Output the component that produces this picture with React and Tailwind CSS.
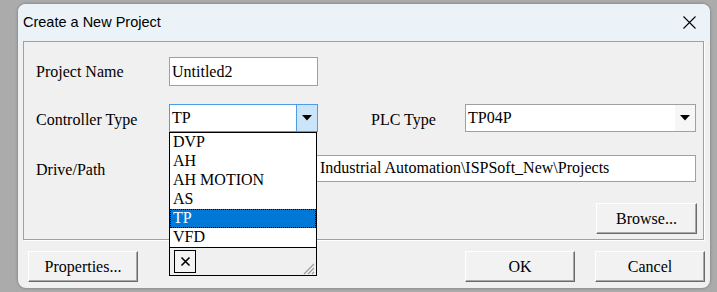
import React from "react";

const serif = { fontFamily: '"Liberation Serif", "Times New Roman", serif' };

function Arrow() {
  return (
    <svg width="10" height="6" viewBox="0 0 10 6">
      <polygon points="0,0 10,0 5,5.5" fill="#000" />
    </svg>
  );
}

function ClassicButton({ children, w = "w-[110px]" }) {
  return (
    <button
      className={
        "h-[31px] bg-[#f2f2f2] border border-t-white border-l-white border-r-[#6b6b6b] border-b-[#6b6b6b] shadow-[inset_-1px_-1px_0_#a8a8a8] text-[16px] text-black flex items-center justify-center " +
        w
      }
      style={serif}
    >
      {children}
    </button>
  );
}

const items = ["DVP", "AH", "AH MOTION", "AS", "TP", "VFD"];

export default function App() {
  return (
    <div className="w-[717px] h-[292px] bg-[#ababab] pl-[18px] pt-[4px] overflow-hidden">
      <div className="w-[692px] h-[284px] rounded-[8px] bg-[#f0f0f0] flex flex-col overflow-hidden shadow-[0_0_3px_rgba(0,0,0,0.35)]">
        {/* Title bar */}
        <div className="h-[37px] bg-[#ebf3f8] flex items-center justify-between pl-[5px] pr-[14px]">
          <span
            className="text-[14.5px] text-black leading-none"
            style={{ fontFamily: '"Liberation Sans", Arial, sans-serif' }}
          >
            Create a New Project
          </span>
          <svg width="13" height="13" viewBox="0 0 13 13">
            <path d="M0.5 0.5 L12.5 12.5 M12.5 0.5 L0.5 12.5" stroke="#000" strokeWidth="1.1" />
          </svg>
        </div>

        {/* Body */}
        <div className="px-[5px] flex flex-col" style={serif}>
          {/* Group box */}
          <div className="w-[681px] h-[199px] border border-[#a0a0a0] shadow-[1px_1px_0_#ffffff] flex flex-col pl-[12px] text-[16px] text-black">
            {/* Row 1 */}
            <div className="flex items-center mt-[15px]">
              <span className="w-[133px] pt-[1px]">Project Name</span>
              <div className="w-[149px] h-[29px] bg-white border border-[#a0a0a0] flex items-center pl-[2px]">
                Untitled2
              </div>
            </div>

            {/* Row 2 */}
            <div className="flex items-center mt-[17px]">
              <span className="w-[133px] pt-[5px]">Controller Type</span>
              <div className="relative z-10">
                <div className="w-[149px] h-[28px] bg-white border border-[#4b9ee6] flex">
                  <div className="flex-1 flex items-center pl-[2px]">TP</div>
                  <div className="w-[21px] h-full bg-[#cce4f7] border-l border-[#4b9ee6] flex items-center justify-center">
                    <Arrow />
                  </div>
                </div>
                {/* Dropdown list */}
                <div className="absolute left-0 top-full w-[148px] bg-white border border-black flex flex-col">
                  {items.map((it) => (
                    <div
                      key={it}
                      className={
                        it === "TP"
                          ? "h-[19px] bg-[#0078d7] text-white border border-dotted border-black flex items-center pl-[2px] leading-none"
                          : "h-[19px] flex items-center pl-[3px] leading-none"
                      }
                    >
                      {it}
                    </div>
                  ))}
                  <div className="h-[28px] bg-[#f0f0f0] border-t border-black flex items-center justify-between pl-[4px] pr-[1px]">
                    <div className="w-[22px] h-[23px] border border-black bg-[#f4f4f4] flex items-center justify-center">
                      <svg width="11" height="11" viewBox="0 0 11 11">
                        <path d="M1.5 1.5 L9.5 9.5 M9.5 1.5 L1.5 9.5" stroke="#000" strokeWidth="1.6" />
                      </svg>
                    </div>
                    <svg width="14" height="14" viewBox="0 0 14 14" className="self-end">
                      <path d="M13 3 L3 13 M13 7 L7 13 M13 11 L11 13" stroke="#9a9a9a" strokeWidth="1.2" />
                    </svg>
                  </div>
                </div>
              </div>
              <span className="ml-[53px] w-[94px] pt-[5px]">PLC Type</span>
              <div className="w-[231px] h-[28px] bg-white border border-[#a0a0a0] flex">
                <div className="flex-1 flex items-center pl-[2px]">TP04P</div>
                <div className="w-[20px] h-full bg-[#f6f6f6] flex items-center justify-center">
                  <Arrow />
                </div>
              </div>
            </div>

            {/* Row 3 */}
            <div className="flex items-center mt-[22px]">
              <span className="w-[133px] pt-[4px]">Drive/Path</span>
              <div className="w-[527px] h-[27px] bg-white border border-[#a0a0a0] flex items-center pl-[150px] whitespace-nowrap overflow-hidden">
                {"Industrial Automation\\ISPSoft_New\\Projects"}
              </div>
            </div>

            {/* Row 4 */}
            <div className="flex justify-end pr-[6px] mt-[21px]">
              <ClassicButton w="w-[101px]">Browse...</ClassicButton>
            </div>
          </div>

          {/* Bottom buttons */}
          <div className="flex justify-between items-center mt-[11px] pl-[5px]">
            <ClassicButton>Properties...</ClassicButton>
            <div className="flex gap-[20px]">
              <ClassicButton>OK</ClassicButton>
              <ClassicButton>Cancel</ClassicButton>
            </div>
          </div>
        </div>
      </div>
    </div>
  );
}
